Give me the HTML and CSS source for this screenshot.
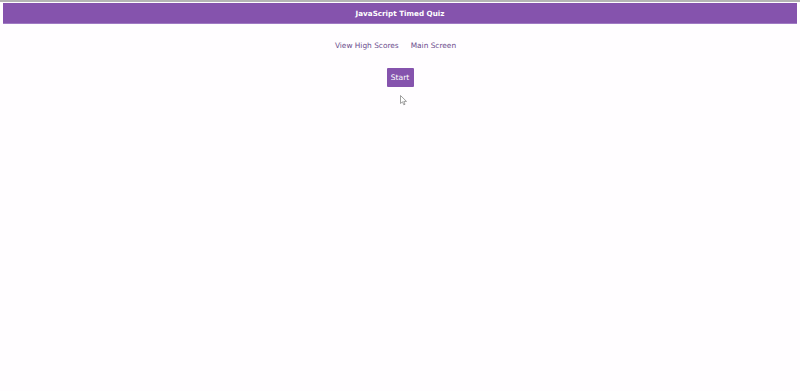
FILE: index.html
```html
<!DOCTYPE html>
<html lang="en">
<head>
    <meta charset="UTF-8">
    <meta name="viewport" content="width=device-width, initial-scale=1.0">
    <title>JavaScript Timed Quiz</title>
    <link rel="stylesheet" href="styles.css">
</head>
<body>
    <div class="topline"></div>
    <div class="page">
        <header class="header">JavaScript Timed Quiz</header>
        <nav class="nav">
            <a href="#">View High Scores</a>
            <a href="#">Main Screen</a>
        </nav>
        <div class="start-row">
            <button class="start">Start</button>
        </div>
    </div>
    <svg class="cursor" width="8" height="11" viewBox="0 0 8 11">
        <path d="M0.5 0.5 L0.5 8.5 L2.5 6.8 L3.8 9.8 L5 9.3 L3.8 6.4 L6.5 6.4 Z" fill="#fff" stroke="#888" stroke-width="0.8"/>
    </svg>
</body>
</html>
```

FILE: styles.css
```css
body {
    margin: 0;
    font-family: "DejaVu Sans", Verdana, sans-serif;
    background: #fffdff;
    height: 391px;
    position: relative;
}
.topline {
    height: 2px;
    background: #b4b4b4;
}
.page {
    padding: 1px 3px 0;
}
.header {
    background: #8553ad;
    color: #fff;
    font-weight: bold;
    font-size: 7.2px;
    height: 20px;
    line-height: 22px;
    text-align: center;
    border-bottom: 1px solid #a07ac4;
}
.nav {
    display: flex;
    justify-content: center;
    gap: 12px;
    margin-top: 17px;
    padding-right: 9px;
    line-height: 10px;
}
.nav a {
    color: #6b4c8c;
    text-decoration: none;
    font-size: 7.4px;
}
.start-row {
    display: flex;
    justify-content: center;
    margin-top: 17px;
}
.start {
    background: #8553ad;
    color: #fff;
    border: none;
    border-radius: 1px;
    font-family: inherit;
    font-size: 7.6px;
    width: 27px;
    height: 19px;
    padding: 0;
}
.cursor {
    position: absolute;
    left: 400px;
    top: 95px;
}
```
